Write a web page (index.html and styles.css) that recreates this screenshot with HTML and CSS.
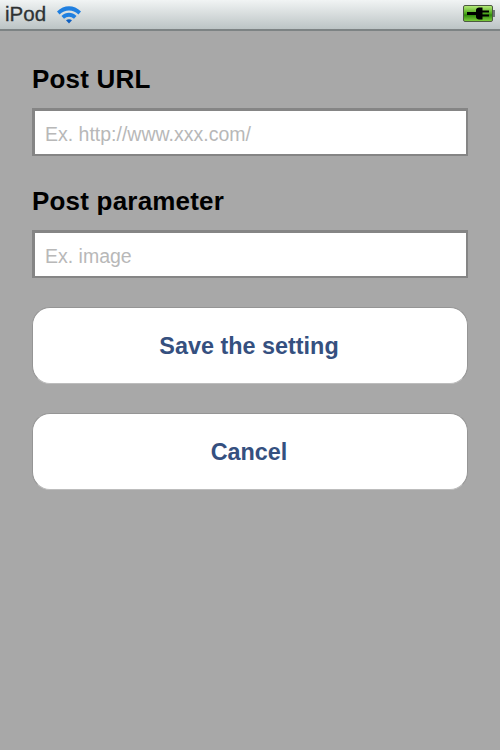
FILE: index.html
```html
<!DOCTYPE html>
<html lang="en">

<head>
    <meta charset="UTF-8">
    <meta name="viewport" content="width=device-width, initial-scale=1.0">
    <title>Post setting</title>
    <link rel="stylesheet" href="styles.css">
</head>

<body>
    <div class="status-bar">
        <div class="status-left">
            <span class="carrier">iPod</span>
            <svg class="wifi" width="26" height="20" viewBox="0 0 26 20">
                <path d="M1 7.500 C8 0.500 18 0.500 25 7.500 L22.500 10.500 C17 5 9 5 3.500 10.500 Z" fill="#1f7fe0"/>
                <path d="M5.500 12 C10 7.800 16 7.800 20.500 12 L18 14.800 C15 12 11 12 8 14.800 Z" fill="#1f7fe0"/>
                <path d="M10 16.300 C12 14.800 14 14.800 16 16.300 L13 19.500 Z" fill="#0f5fc0"/>
            </svg>
        </div>
        <div class="battery">
            <div class="battery-body">
                <svg class="plug" width="26" height="13" viewBox="0 0 26 13">
                    <path d="M2 5 H11 V3 C11 1.500 12.500 0.500 14 0.500 H17.500 V3.500 H24 V5.500 H17.500 V7.500 H24 V9.500 H17.500 V12.500 H14 C12.500 12.500 11 11.500 11 10 V8 H2 Z" fill="#000"/>
                </svg>
            </div>
            <div class="battery-tip"></div>
        </div>
    </div>

    <form class="settings">
        <label class="field-label" for="post-url">Post URL</label>
        <input class="field-input" type="text" id="post-url" placeholder="Ex. http://www.xxx.com/">

        <label class="field-label second" for="post-param">Post parameter</label>
        <input class="field-input" type="text" id="post-param" placeholder="Ex. image">

        <button class="action-btn" type="button">Save the setting</button>
        <button class="action-btn" type="button">Cancel</button>
    </form>
</body>

</html>
```

FILE: styles.css
```css
body {
    margin: 0;
    width: 500px;
    height: 750px;
    overflow: hidden;
    background-color: #a8a8a8;
    font-family: "Liberation Sans", Arial, sans-serif;
}

.status-bar {
    box-sizing: border-box;
    height: 31px;
    padding: 0 5px 2px 5px;
    display: flex;
    justify-content: space-between;
    align-items: center;
    background: linear-gradient(#f1f4f4, #bcc4c5);
    border-bottom: 2px solid #7d8384;
}

.status-left {
    display: flex;
    align-items: center;
    gap: 10px;
}

.carrier {
    font-size: 20.5px;
    color: #2e3233;
    -webkit-text-stroke: 0.3px #2e3233;
}

.battery {
    display: flex;
    align-items: center;
}

.battery-body {
    box-sizing: border-box;
    width: 30px;
    height: 17px;
    display: flex;
    align-items: center;
    justify-content: center;
    border: 1px solid #4c5a42;
    border-radius: 2px;
    background: linear-gradient(#b4ea78, #4da81c 50%, #2f8a0c 60%, #7ccc3c);
}

.battery-tip {
    width: 2px;
    height: 7px;
    background: #6f7678;
}

.settings {
    display: flex;
    flex-direction: column;
    padding: 33px 32px 0;
}

.field-label {
    font-size: 26px;
    line-height: 30px;
    letter-spacing: 0.2px;
    font-weight: bold;
    color: #000;
    margin-bottom: 14px;
}

.field-label.second {
    margin-top: 30px;
}

.field-input {
    box-sizing: border-box;
    width: 100%;
    height: 48px;
    padding: 3px 10px 0 10px;
    font-family: inherit;
    font-size: 19.5px;
    background: #fff;
    border: 2px solid #858585;
    border-left-width: 3px;
    border-top-width: 3px;
    border-radius: 0;
    outline: none;
}

.field-input::placeholder {
    color: #b8b8b8;
    opacity: 1;
}

.action-btn {
    height: 77px;
    padding: 2px 8px 0 6px;
    font-family: inherit;
    font-size: 23.4px;
    font-weight: bold;
    color: #35507f;
    background: #fff;
    border: 1px solid #959595;
    border-bottom-color: #bdbdbd;
    border-radius: 18px;
    margin-top: 29px;
}
```
